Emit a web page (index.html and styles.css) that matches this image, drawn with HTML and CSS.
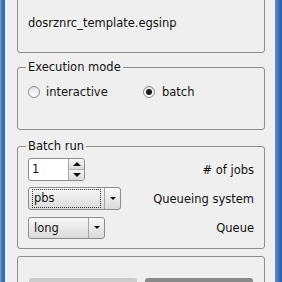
FILE: index.html
```html
<!DOCTYPE html>
<html lang="en">
  <head>
    <meta charset="UTF-8">
    <title>Run settings</title>
    <link rel="stylesheet" href="styles.css">
  </head>
  <body>
  <div class="window">
    <div class="edge-left"></div>
    <div class="panel">
      <!--Input file-->
      <div class="file-box"><span>dosrznrc_template.egsinp</span></div>

      <!--Execution mode-->
      <fieldset class="group exec-group">
        <legend>Execution mode</legend>
        <div class="radio-row">
          <label class="radio first"><span class="dot"></span>interactive</label>
          <label class="radio checked"><span class="dot"></span>batch</label>
        </div>
      </fieldset>

      <!--Batch run settings-->
      <fieldset class="group batch-group">
        <legend>Batch run</legend>
        <div class="form-row">
          <div class="spinbox">
            <span class="spin-field">1</span>
            <span class="spin-buttons">
              <span class="spin-btn"><span class="arrow-up"></span></span>
              <span class="spin-btn"><span class="arrow-down"></span></span>
            </span>
          </div>
          <span class="row-label"># of jobs</span>
        </div>
        <div class="form-row">
          <div class="combo combo-pbs">
            <span class="combo-text"><span class="focus-rect">pbs</span></span>
            <span class="combo-btn"><span class="arrow-down"></span></span>
          </div>
          <span class="row-label">Queueing system</span>
        </div>
        <div class="form-row">
          <div class="combo combo-long">
            <span class="combo-text">long</span>
            <span class="combo-btn"><span class="arrow-down"></span></span>
          </div>
          <span class="row-label">Queue</span>
        </div>
      </fieldset>

      <!--Action buttons-->
      <div class="action-box">
        <div class="btn btn-light"></div>
        <div class="btn btn-dark"></div>
      </div>
    </div>
    <div class="edge-right"></div>
  </div>
  </body>
</html>
```

FILE: styles.css
```css
body {
	margin: 0;
	height: 282px;
	overflow: hidden;
	font-family: "DejaVu Sans", sans-serif;
	font-size: 11.5px;
	color: #111111;
}
.window {
	display: flex;
	height: 282px;
}
.edge-left {
	width: 5px;
	background: linear-gradient(to right, #7fa6d8, #3c6fb6 40%, #3a6ab0);
}
.edge-right {
	width: 7px;
	background: linear-gradient(to right, #5b8dd0, #3d74c2 50%, #2a5798);
}
.panel {
	flex: 1;
	background-color: #efefef;
	padding: 0 10px 0 12px;
	overflow: hidden;
}
.file-box {
	margin-top: -20px;
	height: 73px;
	box-sizing: border-box;
	border: 1px solid #8e8e8e;
	border-radius: 3px;
	padding: 35px 0 0 10px;
	line-height: 14px;
}
.group {
	margin: 0;
	border: 1px solid #8e8e8e;
	border-radius: 3px;
	padding: 0 10px 0 10px;
	min-width: 0;
}
.group legend {
	padding: 0 2px;
	margin-left: -2px;
	line-height: 14px;
}
.exec-group {
	margin-top: 7px;
	padding-top: 10px;
	padding-bottom: 29px;
}
.radio-row {
	display: flex;
	height: 16px;
	align-items: center;
}
.radio {
	display: flex;
	align-items: center;
	gap: 6px;
}
.radio.first {
	width: 115px;
}
.radio.checked {
	gap: 7px;
}
.dot {
	width: 12px;
	height: 12px;
	box-sizing: border-box;
	border: 1px solid #8a8a8a;
	border-radius: 50%;
	background: linear-gradient(#e4e4e4, #ffffff);
	display: flex;
	align-items: center;
	justify-content: center;
}
.checked .dot::after {
	content: "";
	width: 6px;
	height: 6px;
	border-radius: 50%;
	background-color: #1a1a1a;
}
.batch-group {
	margin-top: 9px;
	padding-top: 5px;
	padding-bottom: 9px;
	display: flex;
	flex-direction: column;
	gap: 6px;
}
.form-row {
	display: flex;
	align-items: center;
	justify-content: space-between;
	height: 23px;
}
.spinbox {
	display: flex;
	width: 57px;
	height: 23px;
	box-sizing: border-box;
	border: 1px solid #8c8c8c;
	border-radius: 3px;
	background-color: #ffffff;
	overflow: hidden;
}
.spin-field {
	flex: 1;
	padding-left: 3px;
	line-height: 21px;
}
.spin-buttons {
	width: 15px;
	display: flex;
	flex-direction: column;
	border-left: 1px solid #a8a8a8;
}
.spin-btn {
	flex: 1;
	display: flex;
	align-items: center;
	justify-content: center;
	background: linear-gradient(#f7f7f7, #d9d9d9);
}
.spin-btn + .spin-btn {
	border-top: 1px solid #b4b4b4;
}
.arrow-up {
	width: 0;
	height: 0;
	border-left: 4px solid transparent;
	border-right: 4px solid transparent;
	border-bottom: 4px solid #111111;
}
.arrow-down {
	width: 0;
	height: 0;
	border-left: 4px solid transparent;
	border-right: 4px solid transparent;
	border-top: 4px solid #111111;
}
.combo {
	display: flex;
	height: 23px;
	box-sizing: border-box;
	border: 1px solid #8c8c8c;
	border-radius: 3px;
	background: linear-gradient(#f8f8f8, #dadada);
}
.combo-pbs {
	width: 93px;
}
.combo-long {
	width: 77px;
	height: 22px;
}
.combo-text {
	flex: 1;
	display: flex;
	align-items: center;
	padding: 0 3px;
}
.combo-long .combo-text {
	padding-left: 5px;
}
.focus-rect {
	flex: 1;
	height: 17px;
	line-height: 17px;
	border: 1px dotted #333333;
	padding-left: 1px;
}
.combo-btn {
	width: 15px;
	border-left: 1px solid #a4a4a4;
	display: flex;
	align-items: center;
	justify-content: center;
}
.combo-btn .arrow-down {
	border-left-width: 3px;
	border-right-width: 3px;
	border-top-width: 3px;
}
.action-box {
	margin-top: 7px;
	height: 60px;
	border: 1px solid #8e8e8e;
	border-radius: 3px;
	padding: 21px 0 0 11px;
	display: flex;
	gap: 8px;
}
.btn {
	width: 108px;
	height: 24px;
	border-radius: 3px;
}
.btn-light {
	background-color: #cccccc;
}
.btn-dark {
	background-color: #8a8a8a;
}
```
